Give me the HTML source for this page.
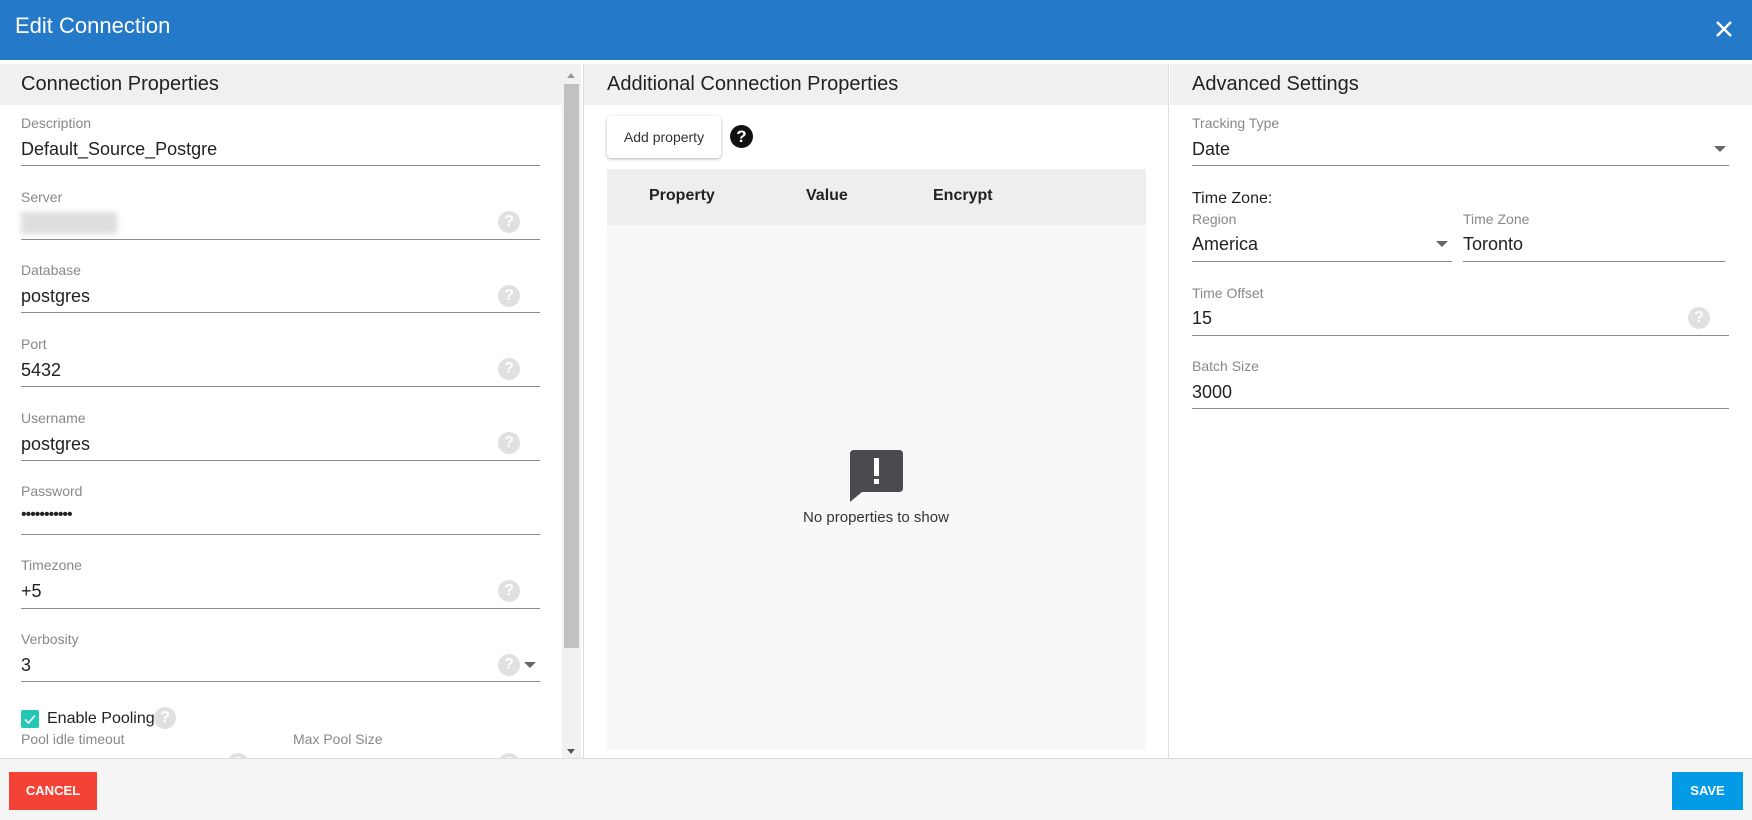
<!DOCTYPE html>
<html><head><style>
*{box-sizing:border-box;margin:0;padding:0}
body{width:1752px;height:820px;overflow:hidden;font-family:"Liberation Sans",sans-serif;background:#fff;position:relative;color:#222}
.a{position:absolute}
.lbl{position:absolute;font-size:14px;color:#888;line-height:16px}
.val{position:absolute;font-size:18px;color:#222;line-height:22px}
.ln{position:absolute;height:1px;background:#8a8a8a}
.hlp{position:absolute;width:22px;height:22px;border-radius:50%;background:#e0e0e0;color:#fff;font-weight:bold;font-size:16px;text-align:center;line-height:22px}
.tri{position:absolute;width:0;height:0;border-left:6px solid transparent;border-right:6px solid transparent;border-top:6px solid #666}
.sec{position:absolute;top:64px;height:41px;background:#f0f0f0;font-size:20px;line-height:41px;color:#222}
</style></head><body>
<div class="a" style="left:0;top:0;width:1752px;height:60px;background:#2479c9"></div>
<div class="a" style="left:15px;top:12px;font-size:22px;color:#fff;line-height:28px">Edit Connection</div>
<svg class="a" style="left:1715px;top:20px" width="18" height="18"><path d="M2 2L16 16M16 2L2 16" stroke="#fff" stroke-width="2.5"/></svg>

<div class="sec" style="left:0;width:562px;padding-left:21px">Connection Properties</div>
<div class="sec" style="left:584px;width:584px;padding-left:23px">Additional Connection Properties</div>
<div class="sec" style="left:1170px;width:582px;padding-left:22px">Advanced Settings</div>

<div class="a" style="left:562px;top:64px;width:19px;height:694px;background:#f1f1f1"></div>
<div class="a" style="left:564px;top:84px;width:15px;height:564px;background:#c1c1c1"></div>
<div class="a" style="left:567px;top:73px;border-left:4px solid transparent;border-right:4px solid transparent;border-bottom:5px solid #999"></div>
<div class="a" style="left:567px;top:749px;border-left:4px solid transparent;border-right:4px solid transparent;border-top:5px solid #555"></div>
<div class="a" style="left:583px;top:64px;width:1px;height:694px;background:#ddd"></div>
<div class="a" style="left:1168px;top:64px;width:1px;height:694px;background:#ddd"></div>

<div class="lbl" style="left:21px;top:115px">Description</div><div class="val" style="left:21px;top:138px">Default_Source_Postgre</div><div class="ln" style="left:21px;top:165px;width:519px"></div>
<div class="lbl" style="left:21px;top:189px">Server</div><div class="a" style="left:21px;top:212px;width:96px;height:22px;background:#ddd;filter:blur(3px)"></div><div class="ln" style="left:21px;top:239px;width:519px"></div><div class="hlp" style="left:498px;top:211px">?</div>
<div class="lbl" style="left:21px;top:262px">Database</div><div class="val" style="left:21px;top:285px">postgres</div><div class="ln" style="left:21px;top:312px;width:519px"></div><div class="hlp" style="left:498px;top:285px">?</div>
<div class="lbl" style="left:21px;top:336px">Port</div><div class="val" style="left:21px;top:359px">5432</div><div class="ln" style="left:21px;top:386px;width:519px"></div><div class="hlp" style="left:498px;top:358px">?</div>
<div class="lbl" style="left:21px;top:410px">Username</div><div class="val" style="left:21px;top:433px">postgres</div><div class="ln" style="left:21px;top:460px;width:519px"></div><div class="hlp" style="left:498px;top:432px">?</div>
<div class="lbl" style="left:21px;top:483px">Password</div><div class="val" style="left:21px;top:504px;font-size:16px;letter-spacing:-1px">•••••••••••</div><div class="ln" style="left:21px;top:534px;width:519px"></div>
<div class="lbl" style="left:21px;top:557px">Timezone</div><div class="val" style="left:21px;top:580px">+5</div><div class="ln" style="left:21px;top:608px;width:519px"></div><div class="hlp" style="left:498px;top:580px">?</div>
<div class="lbl" style="left:21px;top:631px">Verbosity</div><div class="val" style="left:21px;top:654px">3</div><div class="ln" style="left:21px;top:681px;width:519px"></div><div class="hlp" style="left:498px;top:654px">?</div><div class="tri" style="left:524px;top:662px"></div>
<div class="a" style="left:21px;top:710px;width:18px;height:18px;background:#26c6b5;border-radius:2px"></div>
<svg class="a" style="left:21px;top:710px" width="18" height="18"><path d="M4 9.5L7.5 13L14 5.5" stroke="#fff" stroke-width="1.6" fill="none"/></svg>
<div class="a" style="left:47px;top:709px;font-size:16px;color:#222;line-height:20px">Enable Pooling</div>
<div class="hlp" style="left:154px;top:707px">?</div>
<div class="lbl" style="left:21px;top:731px">Pool idle timeout</div>
<div class="lbl" style="left:293px;top:731px">Max Pool Size</div>
<div class="hlp" style="left:227px;top:753px">?</div><div class="hlp" style="left:498px;top:753px">?</div>

<div class="a" style="left:607px;top:116px;width:114px;height:42px;background:#fff;border-radius:4px;box-shadow:0 1px 3px rgba(0,0,0,.3);font-size:14px;color:#333;text-align:center;line-height:42px">Add property</div>
<div class="a" style="left:730px;top:125px;width:23px;height:23px;border-radius:50%;background:#111;color:#fff;font-weight:bold;font-size:17px;text-align:center;line-height:23px">?</div>
<div class="a" style="left:607px;top:169px;width:539px;height:56px;background:#eeeeee"></div>
<div class="a" style="left:607px;top:225px;width:539px;height:525px;background:#f8f8f8"></div>
<div class="a" style="left:649px;top:187px;font-size:16px;font-weight:bold;color:#222">Property</div>
<div class="a" style="left:806px;top:187px;font-size:16px;font-weight:bold;color:#222">Value</div>
<div class="a" style="left:933px;top:187px;font-size:16px;font-weight:bold;color:#222">Encrypt</div>
<svg class="a" style="left:850px;top:450px" width="53" height="53"><path d="M4 0H49Q53 0 53 4V38Q53 42 49 42H12L0 52V4Q0 0 4 0Z" fill="#4a4b4e"/><rect x="24" y="8" width="5" height="18" fill="#fff"/><rect x="24" y="29" width="5" height="5" fill="#fff"/></svg>
<div class="a" style="left:776px;top:509px;width:200px;text-align:center;font-size:15px;color:#333">No properties to show</div>

<div class="lbl" style="left:1192px;top:115px">Tracking Type</div><div class="val" style="left:1192px;top:138px">Date</div><div class="ln" style="left:1192px;top:165px;width:537px"></div><div class="tri" style="left:1714px;top:146px"></div>
<div class="a" style="left:1192px;top:190px;font-size:16px;color:#222">Time Zone:</div>
<div class="lbl" style="left:1192px;top:211px">Region</div><div class="val" style="left:1192px;top:233px">America</div><div class="ln" style="left:1192px;top:261px;width:260px"></div><div class="tri" style="left:1436px;top:241px"></div>
<div class="lbl" style="left:1463px;top:211px">Time Zone</div><div class="val" style="left:1463px;top:233px">Toronto</div><div class="ln" style="left:1463px;top:261px;width:262px"></div>
<div class="lbl" style="left:1192px;top:285px">Time Offset</div><div class="val" style="left:1192px;top:307px">15</div><div class="ln" style="left:1192px;top:335px;width:537px"></div><div class="hlp" style="left:1688px;top:307px">?</div>
<div class="lbl" style="left:1192px;top:358px">Batch Size</div><div class="val" style="left:1192px;top:381px">3000</div><div class="ln" style="left:1192px;top:408px;width:537px"></div>

<div class="a" style="left:0;top:758px;width:1752px;height:62px;background:#f5f5f5;border-top:1px solid #ddd"></div>
<div class="a" style="left:9px;top:772px;width:88px;height:38px;background:#f44336;color:#fff;font-weight:bold;font-size:13px;text-align:center;line-height:38px">CANCEL</div>
<div class="a" style="left:1672px;top:772px;width:71px;height:38px;background:#039be5;color:#fff;font-weight:bold;font-size:13px;text-align:center;line-height:38px">SAVE</div>
</body></html>
